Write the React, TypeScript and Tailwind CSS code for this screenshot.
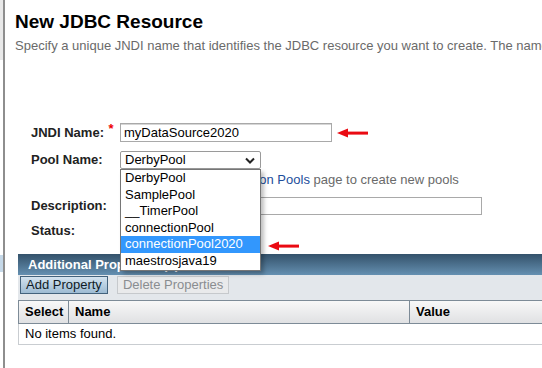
import React from "react";

const pools = [
  "DerbyPool",
  "SamplePool",
  "__TimerPool",
  "connectionPool",
  "connectionPool2020",
  "maestrosjava19",
];

const RedArrow = ({ className }: { className?: string }) => (
  <svg width="31" height="10" viewBox="0 0 31 10" className={className}>
    <polygon points="0,5 11,0.5 11,9.5" fill="#ea0a12" />
    <rect x="10" y="3.6" width="21" height="3" fill="#ea0a12" />
  </svg>
);

const Label = ({ children }: { children: React.ReactNode }) => (
  <div className="w-[89px] shrink-0 text-[13px] font-bold text-[#222]">{children}</div>
);

export default function App() {
  return (
    <div
      className="w-[542px] h-[368px] overflow-hidden bg-white flex"
      style={{ fontFamily: '"Liberation Sans", Arial, sans-serif' }}
    >
      <div className="w-[3px] shrink-0 flex flex-col">
        <div className="h-[60px] bg-[#e9e9e9]" />
        <div className="h-[195px]" />
        <div className="h-[17px] bg-[#c5d8e8]" />
      </div>
      <div className="border-l-2 border-[#8e8e8e] flex-1 pl-[10px] min-w-0">
        <h1 className="mt-[11px] text-[19px] leading-[22px] font-bold text-black">New JDBC Resource</h1>
        <p className="mt-[5px] text-[13px] leading-[16px] text-[#6a6a6a] whitespace-nowrap">
          Specify a unique JNDI name that identifies the JDBC resource you want to create. The name must contain only alphanumeric characters.
        </p>

        <div className="ml-[16px] mt-[69px] flex flex-col">
          <div className="flex items-center h-[19px]">
            <Label>
              JNDI Name: <span className="text-[#e00] relative -top-[4px] ml-[1px]">*</span>
            </Label>
            <div className="w-[212px] h-[19px] border border-[#a9a9a9] shadow-[inset_0_1px_0_#d6d6d6] px-[3px] text-[13px] leading-[17px] text-black">
              myDataSource2020
            </div>
            <RedArrow className="ml-[5px]" />
          </div>

          <div className="flex items-center h-[18px] mt-[9px]">
            <Label>Pool Name:</Label>
            <div className="relative">
              <div className="w-[141px] h-[18px] border border-[#9a9a9a] rounded-[2px] pl-[4px] text-[13px] leading-[16px] text-black flex items-center justify-between pr-[5px]">
                <span>DerbyPool</span>
                <svg width="10" height="7" viewBox="0 0 10 7">
                  <path d="M1 1.5 L5 5.5 L9 1.5" stroke="#222" strokeWidth="2" fill="none" />
                </svg>
              </div>
              <div className="absolute left-0 top-[18px] w-[141px] border border-[#767676] bg-white z-10 shadow-[3px_3px_4px_rgba(0,0,0,0.25)]">
                {pools.map((p) => (
                  <div
                    key={p}
                    className={`relative h-[16.6px] pl-[4px] text-[13px] leading-[16.6px] ${
                      p === "connectionPool2020" ? "bg-[#3297fd] text-white" : "text-black"
                    }`}
                  >
                    {p}
                    {p === "connectionPool2020" && (
                      <RedArrow className="absolute left-[147px] top-[5px]" />
                    )}
                  </div>
                ))}
              </div>
            </div>
          </div>

          <div className="flex items-center h-[16px] mt-[3px]">
            <div className="w-[91px] shrink-0" />
            <div className="text-[13px] leading-[16px] text-[#6a6a6a] whitespace-nowrap">
              Use the <span className="text-[#1d4e9b]">JDBC Connection Pools</span> page to create new pools
            </div>
          </div>

          <div className="flex items-center h-[18px] mt-[9px]">
            <Label>Description:</Label>
            <div className="w-[362px] h-[18px] border border-[#a9a9a9]" />
          </div>

          <div className="flex items-center h-[18px] mt-[7px]">
            <Label>Status:</Label>
          </div>
        </div>

        <div className="ml-[3px] mt-[14px] w-[560px]">
          <div className="h-[21px] bg-gradient-to-b from-[#34526b] to-[#6590b1] text-white text-[13px] font-bold leading-[21px] pl-[10px]">
            Additional Properties (0)
          </div>
          <div className="h-[25px] bg-[#e3e7eb] flex items-start pt-[1px] pl-[2px] gap-[9px]">
            <button className="h-[18px] px-[5px] border border-[#43627c] bg-gradient-to-b from-[#d4e3ef] to-[#9dbbd3] text-[13px] leading-[16px] text-[#0f1b26]">
              Add Property
            </button>
            <button className="h-[18px] px-[5px] border border-[#c6c9cc] bg-[#e9eaeb] text-[13px] leading-[16px] text-[#8a8d90]">
              Delete Properties
            </button>
          </div>
          <div className="flex h-[24px] border-y border-[#7d8b97] border-l bg-gradient-to-b from-[#f8f8f8] to-[#e0e1e3] text-[13px] font-bold text-black leading-[22px]">
            <div className="w-[50px] pl-[6px] border-r border-[#7d8b97]">Select</div>
            <div className="w-[341px] pl-[6px] border-r border-[#7d8b97]">Name</div>
            <div className="flex-1 pl-[6px]">Value</div>
          </div>
          <div className="h-[21px] border-b border-l border-[#c9cdd1] text-[13px] leading-[20px] text-black pl-[6px]">
            No items found.
          </div>
        </div>
      </div>
    </div>
  );
}
